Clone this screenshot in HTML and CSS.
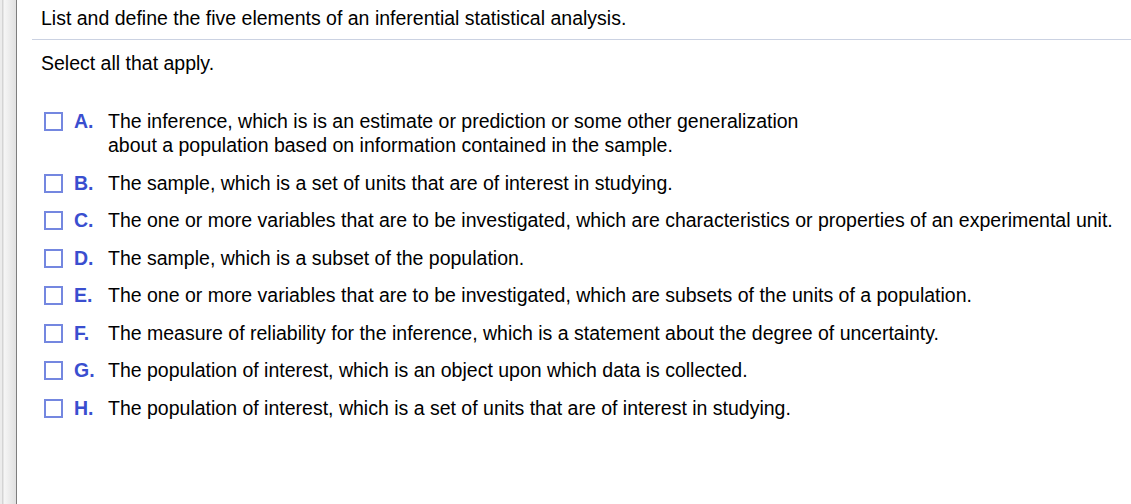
FILE: index.html
```html
<!DOCTYPE html>
<html>
<head>
<meta charset="utf-8">
<link rel="stylesheet" href="styles.css">
</head>
<body>
<div class="page">
  <div class="strip"></div>
  <div class="main">
    <div class="question">List and define the five elements of an inferential statistical analysis.</div>
    <div class="instr">Select all that apply.</div>
    <div class="options">
      <div class="opt"><span class="box"></span><span class="letter">A.</span><span class="text">The inference, which is is an estimate or prediction or some other generalization<br>about a population based on information contained in the sample.</span></div>
      <div class="opt"><span class="box"></span><span class="letter">B.</span><span class="text">The sample, which is a set of units that are of interest in studying.</span></div>
      <div class="opt"><span class="box"></span><span class="letter">C.</span><span class="text">The one or more variables that are to be investigated, which are characteristics or properties of an experimental unit.</span></div>
      <div class="opt"><span class="box"></span><span class="letter">D.</span><span class="text">The sample, which is a subset of the population.</span></div>
      <div class="opt"><span class="box"></span><span class="letter">E.</span><span class="text">The one or more variables that are to be investigated, which are subsets of the units of a population.</span></div>
      <div class="opt"><span class="box"></span><span class="letter">F.</span><span class="text">The measure of reliability for the inference, which is a statement about the degree of uncertainty.</span></div>
      <div class="opt"><span class="box"></span><span class="letter">G.</span><span class="text">The population of interest, which is an object upon which data is collected.</span></div>
      <div class="opt"><span class="box"></span><span class="letter">H.</span><span class="text">The population of interest, which is a set of units that are of interest in studying.</span></div>
    </div>
  </div>
</div>
</body>
</html>
```
FILE: styles.css
```css
html, body {
  margin: 0;
  padding: 0;
  background: #ffffff;
}
body {
  font-family: "Liberation Sans", Arial, sans-serif;
  font-size: 19.5px;
  color: #000000;
}
.page {
  display: flex;
  min-height: 504px;
}
.strip {
  flex: none;
  width: 17px;
  box-sizing: border-box;
  background: linear-gradient(to right, #ececec 0, #ececec 2px, #d4d4d4 2px, #d4d4d4 3px, #f6f6f6 4px, #e2e2e2 15px);
  border-right: 1px solid #7d7d7d;
}
.main {
  flex: 1;
  padding-left: 15px;
}
.question {
  padding: 7px 0 10px 9px;
  line-height: 22px;
  border-bottom: 1px solid #cbd2e2;
}
.instr {
  padding: 12px 0 0 9px;
  line-height: 22px;
}
.options {
  display: flex;
  flex-direction: column;
  gap: 13.5px;
  margin-top: 35px;
  padding-left: 12px;
}
.opt {
  display: flex;
  align-items: flex-start;
  line-height: 24px;
}
.box {
  flex: none;
  width: 15px;
  height: 15px;
  border: 2px solid #7487e0;
  background: #fff;
  margin-top: 3px;
}
.letter {
  flex: none;
  width: 45px;
  padding-left: 11px;
  box-sizing: border-box;
  color: #3a4ecf;
  font-weight: bold;
}
.text {
  flex: 1;
}
```
